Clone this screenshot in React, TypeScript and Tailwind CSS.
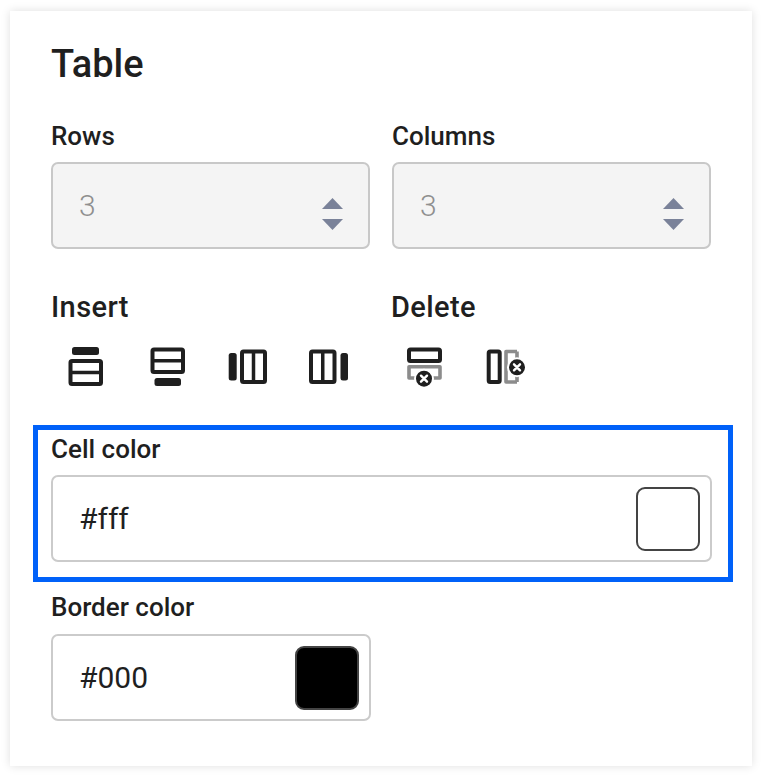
const DARK = '#1f1f1f'
const GREY = '#8c8c8c'

function Icon({ children }: { children: React.ReactNode }) {
  return (
    <svg width="48" height="48" viewBox="0 0 48 48" fill="none" className="shrink-0">
      {children}
    </svg>
  )
}

function CloseDot({ cx, cy }: { cx: number; cy: number }) {
  return (
    <>
      <circle cx={cx} cy={cy} r="10" fill="#fff" />
      <circle cx={cx} cy={cy} r="8" fill={DARK} />
      <path
        d={`M${cx - 3} ${cy - 3}L${cx + 3} ${cy + 3}M${cx + 3} ${cy - 3}L${cx - 3} ${cy + 3}`}
        stroke="#fff"
        strokeWidth="2.4"
        strokeLinecap="round"
      />
    </>
  )
}

function InsertRowAbove() {
  return (
    <Icon>
      <rect x="10" y="5" width="27" height="8" rx="2.5" fill={DARK} />
      <rect x="8.5" y="19" width="30.5" height="23" rx="1.5" stroke={DARK} strokeWidth="4" />
      <path d="M8 30.5H39" stroke={DARK} strokeWidth="3.5" />
    </Icon>
  )
}

function InsertRowBelow() {
  return (
    <Icon>
      <rect x="9.5" y="7.5" width="30.5" height="22.5" rx="1.5" stroke={DARK} strokeWidth="4" />
      <path d="M9 18.75H40" stroke={DARK} strokeWidth="3.5" />
      <rect x="11.5" y="36" width="26.5" height="8" rx="2.5" fill={DARK} />
    </Icon>
  )
}

function InsertColumnLeft() {
  return (
    <Icon>
      <rect x="5.7" y="11" width="8" height="27.5" rx="2.5" fill={DARK} />
      <rect x="19" y="9.5" width="23" height="30.5" rx="1.5" stroke={DARK} strokeWidth="4" />
      <path d="M30.5 9V40" stroke={DARK} strokeWidth="3.5" />
    </Icon>
  )
}

function InsertColumnRight() {
  return (
    <Icon>
      <rect x="7" y="9.5" width="23.5" height="30.5" rx="1.5" stroke={DARK} strokeWidth="4" />
      <path d="M18.75 9V40" stroke={DARK} strokeWidth="3.5" />
      <rect x="36.5" y="11" width="7.5" height="27.5" rx="2.5" fill={DARK} />
    </Icon>
  )
}

function DeleteRow() {
  return (
    <Icon>
      <rect x="9" y="7.5" width="31" height="11.5" rx="1.5" stroke={DARK} strokeWidth="4" />
      <path d="M16 36H9V24.7H40V36H32" stroke={GREY} strokeWidth="3.6" strokeLinejoin="round" />
      <CloseDot cx={24} cy={36.7} />
    </Icon>
  )
}

function DeleteColumn() {
  return (
    <Icon>
      <rect x="7.7" y="9.5" width="11" height="30.5" rx="1.5" stroke={DARK} strokeWidth="4" />
      <path d="M36 9.5H25V40H36" stroke={GREY} strokeWidth="3.6" strokeLinejoin="round" />
      <path d="M36 9.5V16M36 40V34" stroke={GREY} strokeWidth="3.6" />
      <CloseDot cx={36} cy={25.3} />
    </Icon>
  )
}

function NumberField({ label }: { label: string }) {
  return (
    <div className="flex flex-col">
      <label className="text-[26px] leading-[28px] font-medium text-[#1f1f1f] mb-[12px]">{label}</label>
      <div className="h-[87px] bg-[#f4f4f4] border-2 border-[#c8c8c8] rounded-[7px] flex items-center justify-between pl-[26px] pr-[25px]">
        <span className="text-[30px] font-light text-[#8f8f8f]">3</span>
        <svg width="21" height="32" viewBox="0 0 21 32" className="mt-[16px]">
          <path d="M10.5 0L21 11H0Z" fill="#7a8299" />
          <path d="M0 21H21L10.5 32Z" fill="#7a8299" />
        </svg>
      </div>
    </div>
  )
}

function ColorField({ label, value, swatch, className, labelGap }: { label: string; value: string; swatch: string; className: string; labelGap: string }) {
  return (
    <div className="flex flex-col">
      <label className={`${labelGap} text-[26px] leading-[28px] font-medium text-[#1f1f1f]`}>{label}</label>
      <div className={`${className} h-[87px] bg-white border-2 border-[#cbcbcb] rounded-[7px] flex items-center justify-between pl-[26px] pr-[10px]`}>
        <span className="text-[30px] text-[#1f1f1f]">{value}</span>
        <div className={`${swatch} w-[64px] h-[64px] rounded-[9px] border-2 border-[#444444]`} />
      </div>
    </div>
  )
}

export default function App() {
  return (
    <div className="w-[762px] h-[775px] bg-white pt-[11px] pl-[10px] font-['Roboto',sans-serif]">
      <div className="w-[742px] h-[755px] bg-white shadow-[0_0_9px_rgba(0,0,0,0.13)] pl-[41px] pt-[28px]">
        <h1 className="text-[38px] leading-[50px] font-medium text-[#1f1f1f] mb-[33px]">Table</h1>

        <div className="grid grid-cols-[319px_319px] gap-x-[22px]">
          <NumberField label="Rows" />
          <NumberField label="Columns" />
        </div>

        <div className="grid grid-cols-[319px_319px] gap-x-[22px] mt-[44px]">
          <div>
            <div className="text-[29px] tracking-[0.4px] leading-[28px] font-medium text-[#1f1f1f] mb-[21px]">Insert</div>
            <div className="flex gap-[32.7px] pl-[11px]">
              <InsertRowAbove />
              <InsertRowBelow />
              <InsertColumnLeft />
              <InsertColumnRight />
            </div>
          </div>
          <div>
            <div className="text-[29px] tracking-[0.4px] leading-[28px] font-medium text-[#1f1f1f] mb-[21px] -ml-[1px]">Delete</div>
            <div className="flex gap-[33px] pl-[8px]">
              <DeleteRow />
              <DeleteColumn />
            </div>
          </div>
        </div>

        <div className="w-[700px] h-[157px] -ml-[18px] mt-[35px] border-[5px] border-[#0061f9] pl-[13px] pt-[5px]">
          <ColorField label="Cell color" value="#fff" swatch="bg-white" className="w-[661px]" labelGap="mb-[12px]" />
        </div>

        <div className="mt-[11px]">
          <ColorField label="Border color" value="#000" swatch="bg-black" className="w-[320px]" labelGap="mb-[13px]" />
        </div>
      </div>
    </div>
  )
}
